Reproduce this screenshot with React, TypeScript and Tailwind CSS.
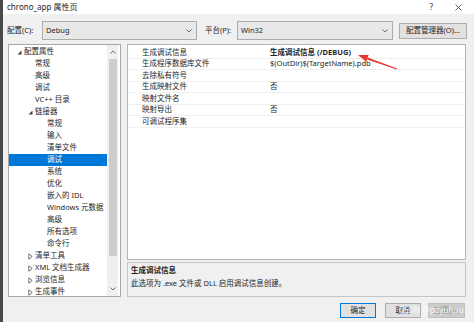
import React from 'react'

type TreeNode = {
  label: string
  level: 0 | 1 | 2
  toggle?: 'open' | 'closed'
  selected?: boolean
}

const tree: TreeNode[] = [
  { label: '配置属性', level: 0, toggle: 'open' },
  { label: '常规', level: 1 },
  { label: '高级', level: 1 },
  { label: '调试', level: 1 },
  { label: 'VC++ 目录', level: 1 },
  { label: '链接器', level: 1, toggle: 'open' },
  { label: '常规', level: 2 },
  { label: '输入', level: 2 },
  { label: '清单文件', level: 2 },
  { label: '调试', level: 2, selected: true },
  { label: '系统', level: 2 },
  { label: '优化', level: 2 },
  { label: '嵌入的 IDL', level: 2 },
  { label: 'Windows 元数据', level: 2 },
  { label: '高级', level: 2 },
  { label: '所有选项', level: 2 },
  { label: '命令行', level: 2 },
  { label: '清单工具', level: 1, toggle: 'closed' },
  { label: 'XML 文档生成器', level: 1, toggle: 'closed' },
  { label: '浏览信息', level: 1, toggle: 'closed' },
  { label: '生成事件', level: 1, toggle: 'closed' },
]

const props = [
  { name: '生成调试信息', value: '生成调试信息 (/DEBUG)', bold: true },
  { name: '生成程序数据库文件', value: '$(OutDir)$(TargetName).pdb' },
  { name: '去除私有符号', value: '' },
  { name: '生成映射文件', value: '否' },
  { name: '映射文件名', value: '' },
  { name: '映射导出', value: '否' },
  { name: '可调试程序集', value: '' },
]

const indent = { 0: 'pl-[5px]', 1: 'pl-[16px]', 2: 'pl-[28px]' }

function Chevron({ up = false }: { up?: boolean }) {
  return (
    <svg width="6" height="4" viewBox="0 0 6 4" className="block">
      <path d={up ? 'M0.5 3.5 L3 1 L5.5 3.5' : 'M0.5 0.5 L3 3 L5.5 0.5'} fill="none" stroke="#606060" strokeWidth="0.9" />
    </svg>
  )
}

function Toggle({ kind }: { kind?: 'open' | 'closed' }) {
  if (kind === 'open')
    return (
      <svg width="5" height="5" viewBox="0 0 5 5">
        <path d="M4.5 0.5 V4.5 H0.5 Z" fill="#404040" />
      </svg>
    )
  if (kind === 'closed')
    return (
      <svg width="5" height="7" viewBox="0 0 5 7">
        <path d="M0.8 0.8 L4.2 3.5 L0.8 6.2 Z" fill="none" stroke="#505050" strokeWidth="0.8" />
      </svg>
    )
  return null
}

function Dropdown({ value, width }: { value: string; width: string }) {
  return (
    <div className={`${width} h-[19px] flex items-center justify-between pl-[3px] pr-[4px] bg-[#e8e8e8] border border-[#acacac]`}>
      <span>{value}</span>
      <Chevron />
    </div>
  )
}

export default function App() {
  return (
    <div className="relative w-[474px] h-[322px] overflow-hidden flex bg-[#f0f0f0] text-[7.5px] leading-none text-[#1e1e1e] font-['Noto_Sans','Noto_Sans_CJK_SC',sans-serif]">
      <div className="w-[3px] bg-[#4a4a4a]" />
      <div className="flex-1 flex flex-col">
        {/* title bar */}
        <div className="h-[14px] bg-white flex items-center pl-[4px] pr-[12px] text-[8px]">
          <span className="flex-1">chrono_app 属性页</span>
          <span className="mr-[22px] text-[8px] text-[#333]">?</span>
          <svg width="7" height="7" viewBox="0 0 7 7">
            <path d="M0.5 0.5 L6.5 6.5 M6.5 0.5 L0.5 6.5" stroke="#333" strokeWidth="0.8" />
          </svg>
        </div>

        {/* config row */}
        <div className="mt-[7px] h-[19px] flex items-center pl-[4px]">
          <span className="w-[35px]">配置(C):</span>
          <Dropdown value="Debug" width="w-[155px]" />
          <span className="ml-[8px] w-[32px]">平台(P):</span>
          <Dropdown value="Win32" width="w-[156px]" />
          <button className="ml-[6px] w-[68px] h-[16px] bg-[#e1e1e1] border border-[#adadad] flex items-center justify-center">
            配置管理器(O)...
          </button>
        </div>

        {/* main area */}
        <div className="mt-[4px] flex pl-[5px]">
          <div className="w-[113px] h-[253px] bg-white border border-[#a8a8a8] flex overflow-hidden">
            <div className="flex-1 pt-[1px]">
              {tree.map((n, i) => (
                <div
                  key={i}
                  className={`h-[12px] flex items-center whitespace-nowrap ${indent[n.level]} ${n.selected ? 'bg-[#0078d7] text-white' : ''}`}
                >
                  <span className="w-[10px] flex items-center justify-center">
                    <Toggle kind={n.toggle} />
                  </span>
                  <span>{n.label}</span>
                </div>
              ))}
            </div>
            <div className="w-[11px] bg-[#f0f0f0] flex flex-col items-center py-[5px] mr-[2px]">
              <Chevron up />
              <div className="mt-[5px] w-[8px] h-[197px] bg-[#cdcdcd]" />
              <div className="flex-1" />
              <Chevron />
            </div>
          </div>

          <div className="ml-[6px] w-[339px] flex flex-col">
            <div className="relative h-[216px] bg-white border border-[#b4b4b4] pt-[2px]">
              {props.map((p, i) => (
                <div key={i} className="h-[11.5px] flex items-center border-b border-[#f0f0f0] whitespace-nowrap">
                  <span className="w-[142px] pl-[14px]">{p.name}</span>
                  <span className={p.bold ? 'font-bold' : ''}>{p.value}</span>
                </div>
              ))}
            </div>
            <div className="mt-[2px] h-[35px] border border-[#c4c4c4] bg-[#f0f0f0] pl-[3px] pt-[4px] flex flex-col gap-[5px]">
              <span className="font-bold">生成调试信息</span>
              <span>此选项为 .exe 文件或 DLL 启用调试信息创建。</span>
            </div>
          </div>
        </div>

        {/* buttons */}
        <div className="mt-[6px] h-[15px] flex justify-end pr-[9px]">
          <button className="w-[36px] h-[15px] bg-[#e1e1e1] border border-[#0078d7] flex items-center justify-center">确定</button>
          <button className="ml-[9px] w-[36px] h-[15px] bg-[#e1e1e1] border border-[#adadad] flex items-center justify-center">取消</button>
          <button className="ml-[7px] w-[37px] h-[15px] bg-[#cccccc] border border-[#bfbfbf] text-[#838383] flex items-center justify-center">应用(A)</button>
        </div>
      </div>

      {/* annotation arrow */}
      <svg className="absolute left-[355px] top-[50px]" width="46" height="22" viewBox="0 0 46 22">
        <path d="M3 5 L13.6 5.1 L11.2 11.7 Z" fill="#e8392b" />
        <path d="M12.6 7.6 L42.2 18.4 L41.8 19.6 L12 9.4 Z" fill="#e8392b" />
      </svg>

      {/* watermark */}
      <span className="absolute left-[399px] top-[306px] text-[8px] text-white/80">CSDN @pdyuhuu</span>
    </div>
  )
}
